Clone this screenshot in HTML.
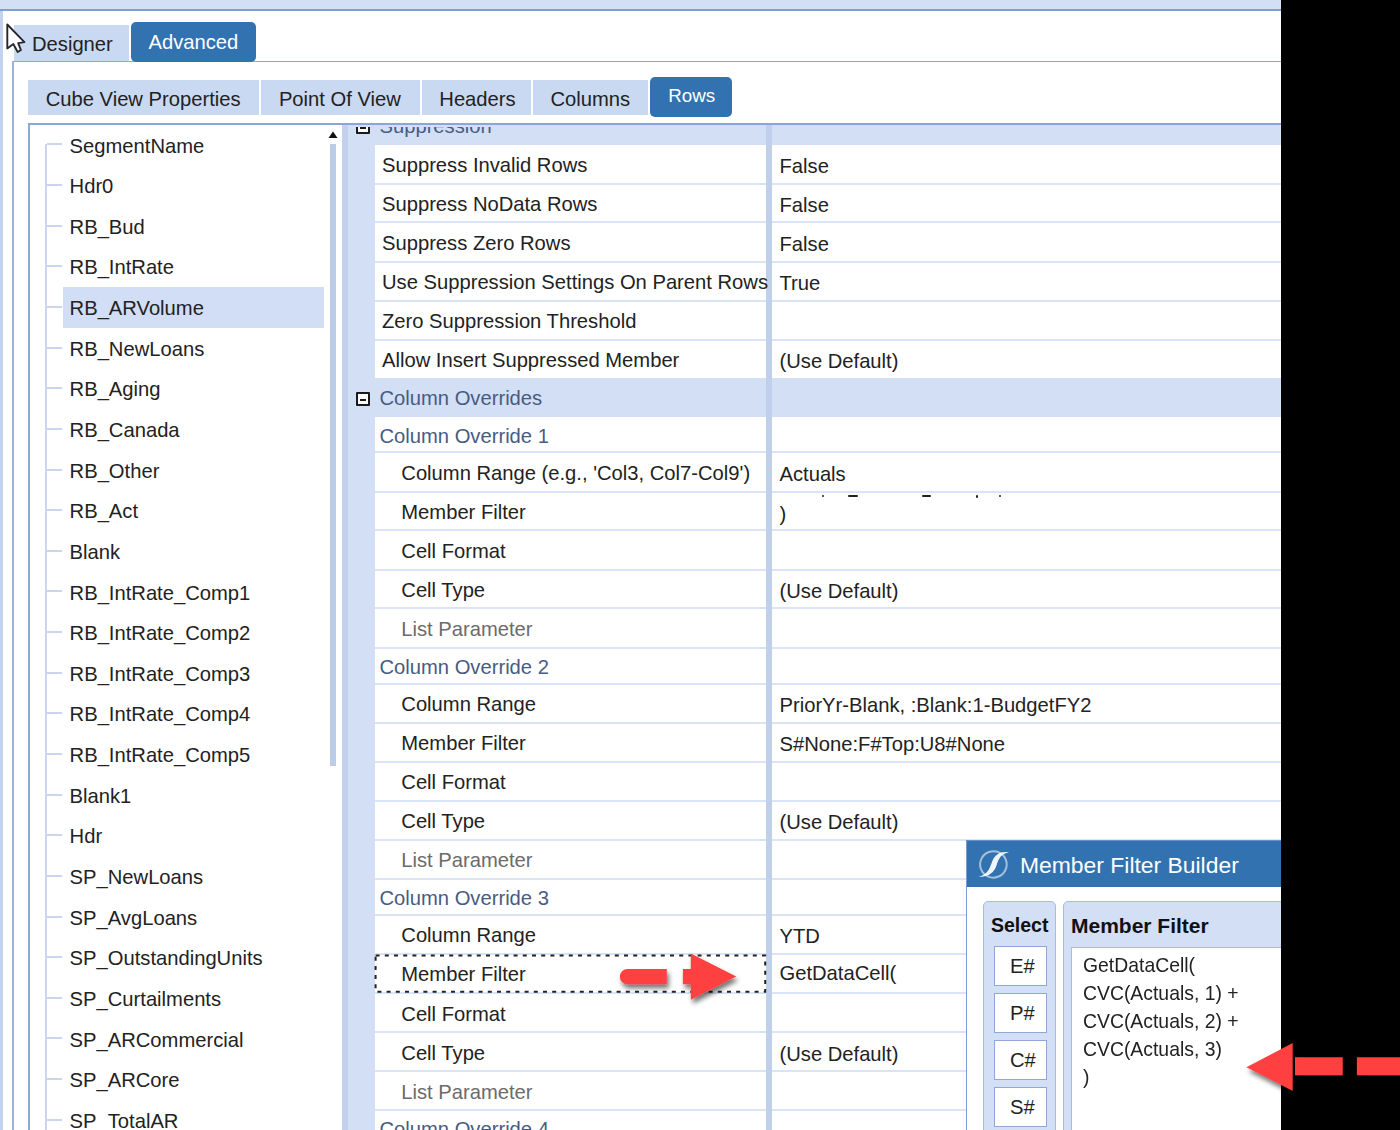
<!DOCTYPE html><html><head><meta charset="utf-8"><style>
html,body{margin:0;padding:0}
body{width:1400px;height:1130px;position:relative;overflow:hidden;background:#fff;font-family:"Liberation Sans",sans-serif;color:#222}
div,span,svg{position:absolute}
.t{white-space:nowrap}
</style></head><body>
<div style="left:0px;top:0px;width:1281px;height:9px;background:#d3dff5"></div>
<div style="left:0px;top:9px;width:1281px;height:2px;background:#7f9ed3"></div>
<div style="left:0px;top:11px;width:3px;height:1119px;background:#c3d2ee"></div>
<div style="left:13px;top:61px;width:1268px;height:1px;background:#8ea9d6"></div>
<div style="left:12px;top:61px;width:2px;height:1069px;background:#9db2d8"></div>
<div style="left:14px;top:25px;width:115px;height:36px;background:#c9d9f1"></div>
<span class="t" style="left:32px;top:33.60px;font-size:20.2px;line-height:20.2px;">Designer</span>
<div style="left:131px;top:22px;width:125px;height:40px;background:#3372b1;border-radius:5px"></div>
<span class="t" style="left:148.5px;top:31.50px;font-size:20.2px;line-height:20.2px;color:#fff">Advanced</span>
<div style="left:28px;top:80px;width:231px;height:35px;background:#c9d9f1"></div>
<span class="t" style="left:45.7px;top:89.20px;font-size:20.2px;line-height:20.2px;">Cube View Properties</span>
<div style="left:261px;top:80px;width:159px;height:35px;background:#c9d9f1"></div>
<span class="t" style="left:278.9px;top:88.60px;font-size:20.2px;line-height:20.2px;">Point Of View</span>
<div style="left:422px;top:80px;width:109px;height:35px;background:#c9d9f1"></div>
<span class="t" style="left:439.3px;top:88.60px;font-size:20.2px;line-height:20.2px;">Headers</span>
<div style="left:533px;top:80px;width:115px;height:35px;background:#c9d9f1"></div>
<span class="t" style="left:550.4px;top:88.80px;font-size:20.2px;line-height:20.2px;">Columns</span>
<div style="left:650px;top:77px;width:82px;height:40px;background:#3372b1;border-radius:5px"></div>
<span class="t" style="left:668.3px;top:87.29px;font-size:18.8px;line-height:18.8px;color:#fff">Rows</span>
<div style="left:28px;top:123px;width:1253px;height:2px;background:#8aa6d6"></div>
<div style="left:28px;top:123px;width:2px;height:1007px;background:#8aa6d6"></div>
<div style="left:62.5px;top:287.4px;width:261px;height:40.6px;background:#d2def5"></div>
<div style="left:45px;top:143.5px;width:2px;height:990px;background:#c9d6ee"></div>
<div style="left:47px;top:143.4px;width:15px;height:2px;background:#c9d6ee"></div>
<span class="t" style="left:69.6px;top:135.50px;font-size:20.2px;line-height:20.2px;">SegmentName</span>
<div style="left:47px;top:184.04000000000002px;width:15px;height:2px;background:#c9d6ee"></div>
<span class="t" style="left:69.6px;top:176.14px;font-size:20.2px;line-height:20.2px;">Hdr0</span>
<div style="left:47px;top:224.68px;width:15px;height:2px;background:#c9d6ee"></div>
<span class="t" style="left:69.6px;top:216.78px;font-size:20.2px;line-height:20.2px;">RB_Bud</span>
<div style="left:47px;top:265.32px;width:15px;height:2px;background:#c9d6ee"></div>
<span class="t" style="left:69.6px;top:257.42px;font-size:20.2px;line-height:20.2px;">RB_IntRate</span>
<div style="left:47px;top:305.96000000000004px;width:15px;height:2px;background:#c9d6ee"></div>
<span class="t" style="left:69.6px;top:298.06px;font-size:20.2px;line-height:20.2px;">RB_ARVolume</span>
<div style="left:47px;top:346.6px;width:15px;height:2px;background:#c9d6ee"></div>
<span class="t" style="left:69.6px;top:338.70px;font-size:20.2px;line-height:20.2px;">RB_NewLoans</span>
<div style="left:47px;top:387.24px;width:15px;height:2px;background:#c9d6ee"></div>
<span class="t" style="left:69.6px;top:379.34px;font-size:20.2px;line-height:20.2px;">RB_Aging</span>
<div style="left:47px;top:427.88px;width:15px;height:2px;background:#c9d6ee"></div>
<span class="t" style="left:69.6px;top:419.98px;font-size:20.2px;line-height:20.2px;">RB_Canada</span>
<div style="left:47px;top:468.52px;width:15px;height:2px;background:#c9d6ee"></div>
<span class="t" style="left:69.6px;top:460.62px;font-size:20.2px;line-height:20.2px;">RB_Other</span>
<div style="left:47px;top:509.15999999999997px;width:15px;height:2px;background:#c9d6ee"></div>
<span class="t" style="left:69.6px;top:501.26px;font-size:20.2px;line-height:20.2px;">RB_Act</span>
<div style="left:47px;top:549.8px;width:15px;height:2px;background:#c9d6ee"></div>
<span class="t" style="left:69.6px;top:541.90px;font-size:20.2px;line-height:20.2px;">Blank</span>
<div style="left:47px;top:590.44px;width:15px;height:2px;background:#c9d6ee"></div>
<span class="t" style="left:69.6px;top:582.54px;font-size:20.2px;line-height:20.2px;">RB_IntRate_Comp1</span>
<div style="left:47px;top:631.08px;width:15px;height:2px;background:#c9d6ee"></div>
<span class="t" style="left:69.6px;top:623.18px;font-size:20.2px;line-height:20.2px;">RB_IntRate_Comp2</span>
<div style="left:47px;top:671.72px;width:15px;height:2px;background:#c9d6ee"></div>
<span class="t" style="left:69.6px;top:663.82px;font-size:20.2px;line-height:20.2px;">RB_IntRate_Comp3</span>
<div style="left:47px;top:712.36px;width:15px;height:2px;background:#c9d6ee"></div>
<span class="t" style="left:69.6px;top:704.46px;font-size:20.2px;line-height:20.2px;">RB_IntRate_Comp4</span>
<div style="left:47px;top:753.0px;width:15px;height:2px;background:#c9d6ee"></div>
<span class="t" style="left:69.6px;top:745.10px;font-size:20.2px;line-height:20.2px;">RB_IntRate_Comp5</span>
<div style="left:47px;top:793.64px;width:15px;height:2px;background:#c9d6ee"></div>
<span class="t" style="left:69.6px;top:785.74px;font-size:20.2px;line-height:20.2px;">Blank1</span>
<div style="left:47px;top:834.28px;width:15px;height:2px;background:#c9d6ee"></div>
<span class="t" style="left:69.6px;top:826.38px;font-size:20.2px;line-height:20.2px;">Hdr</span>
<div style="left:47px;top:874.92px;width:15px;height:2px;background:#c9d6ee"></div>
<span class="t" style="left:69.6px;top:867.02px;font-size:20.2px;line-height:20.2px;">SP_NewLoans</span>
<div style="left:47px;top:915.56px;width:15px;height:2px;background:#c9d6ee"></div>
<span class="t" style="left:69.6px;top:907.66px;font-size:20.2px;line-height:20.2px;">SP_AvgLoans</span>
<div style="left:47px;top:956.1999999999999px;width:15px;height:2px;background:#c9d6ee"></div>
<span class="t" style="left:69.6px;top:948.30px;font-size:20.2px;line-height:20.2px;">SP_OutstandingUnits</span>
<div style="left:47px;top:996.84px;width:15px;height:2px;background:#c9d6ee"></div>
<span class="t" style="left:69.6px;top:988.94px;font-size:20.2px;line-height:20.2px;">SP_Curtailments</span>
<div style="left:47px;top:1037.48px;width:15px;height:2px;background:#c9d6ee"></div>
<span class="t" style="left:69.6px;top:1029.58px;font-size:20.2px;line-height:20.2px;">SP_ARCommercial</span>
<div style="left:47px;top:1078.1200000000001px;width:15px;height:2px;background:#c9d6ee"></div>
<span class="t" style="left:69.6px;top:1070.22px;font-size:20.2px;line-height:20.2px;">SP_ARCore</span>
<div style="left:47px;top:1118.76px;width:15px;height:2px;background:#c9d6ee"></div>
<span class="t" style="left:69.6px;top:1110.86px;font-size:20.2px;line-height:20.2px;">SP_TotalAR</span>
<svg style="left:327px;top:130px" width="12" height="9"><polygon points="1.5,8 6,1.5 10.5,8" fill="#111"/></svg>
<div style="left:330px;top:144px;width:6px;height:622px;background:#bccbe6"></div>
<div style="left:342px;top:125px;width:6px;height:2px;background:#c3d2ec"></div>
<div style="left:348px;top:125px;width:933px;height:2px;background:#d2dff5"></div>
<div style="left:766px;top:125px;width:6px;height:2px;background:#c0d0ea"></div>
<div style="left:0;top:127px;width:1281px;height:1003px;overflow:hidden"><div style="left:0;top:-127px;width:1281px;height:1130px">
<div style="left:342px;top:125px;width:6px;height:1005px;background:#c3d2ec"></div>
<div style="left:348px;top:125px;width:933px;height:1005px;background:#d2dff5"></div>
<div style="left:375px;top:144.8px;width:906px;height:38.89999999999998px;background:#fff"></div>
<div style="left:375px;top:183.7px;width:906px;height:38.60000000000002px;background:#fff"></div>
<div style="left:375px;top:222.3px;width:906px;height:39.39999999999998px;background:#fff"></div>
<div style="left:375px;top:261.7px;width:906px;height:39.19999999999999px;background:#fff"></div>
<div style="left:375px;top:300.9px;width:906px;height:38.900000000000034px;background:#fff"></div>
<div style="left:375px;top:339.8px;width:906px;height:38.39999999999998px;background:#fff"></div>
<div style="left:375px;top:416.7px;width:906px;height:35.60000000000002px;background:#fff"></div>
<div style="left:375px;top:452.3px;width:906px;height:39.19999999999999px;background:#fff"></div>
<div style="left:375px;top:491.5px;width:906px;height:38.89999999999998px;background:#fff"></div>
<div style="left:375px;top:530.4px;width:906px;height:39.10000000000002px;background:#fff"></div>
<div style="left:375px;top:569.5px;width:906px;height:38.89999999999998px;background:#fff"></div>
<div style="left:375px;top:608.4px;width:906px;height:39.200000000000045px;background:#fff"></div>
<div style="left:375px;top:647.6px;width:906px;height:36.10000000000002px;background:#fff"></div>
<div style="left:375px;top:683.7px;width:906px;height:39.09999999999991px;background:#fff"></div>
<div style="left:375px;top:722.8px;width:906px;height:39.0px;background:#fff"></div>
<div style="left:375px;top:761.8px;width:906px;height:38.90000000000009px;background:#fff"></div>
<div style="left:375px;top:800.7px;width:906px;height:39.19999999999993px;background:#fff"></div>
<div style="left:375px;top:839.9px;width:906px;height:39.10000000000002px;background:#fff"></div>
<div style="left:375px;top:879.0px;width:906px;height:35.799999999999955px;background:#fff"></div>
<div style="left:375px;top:914.8px;width:906px;height:39.200000000000045px;background:#fff"></div>
<div style="left:375px;top:954.0px;width:906px;height:39.10000000000002px;background:#fff"></div>
<div style="left:375px;top:993.1px;width:906px;height:39.10000000000002px;background:#fff"></div>
<div style="left:375px;top:1032.2px;width:906px;height:39.09999999999991px;background:#fff"></div>
<div style="left:375px;top:1071.3px;width:906px;height:39.100000000000136px;background:#fff"></div>
<div style="left:375px;top:1110.4px;width:906px;height:39.09999999999991px;background:#fff"></div>
<div style="left:375px;top:182.7px;width:906px;height:2px;background:#d9e4f6"></div>
<div style="left:375px;top:221.3px;width:906px;height:2px;background:#d9e4f6"></div>
<div style="left:375px;top:260.7px;width:906px;height:2px;background:#d9e4f6"></div>
<div style="left:375px;top:299.9px;width:906px;height:2px;background:#d9e4f6"></div>
<div style="left:375px;top:338.8px;width:906px;height:2px;background:#d9e4f6"></div>
<div style="left:375px;top:451.3px;width:906px;height:2px;background:#d9e4f6"></div>
<div style="left:375px;top:490.5px;width:906px;height:2px;background:#d9e4f6"></div>
<div style="left:375px;top:529.4px;width:906px;height:2px;background:#d9e4f6"></div>
<div style="left:375px;top:568.5px;width:906px;height:2px;background:#d9e4f6"></div>
<div style="left:375px;top:607.4px;width:906px;height:2px;background:#d9e4f6"></div>
<div style="left:375px;top:646.6px;width:906px;height:2px;background:#d9e4f6"></div>
<div style="left:375px;top:682.7px;width:906px;height:2px;background:#d9e4f6"></div>
<div style="left:375px;top:721.8px;width:906px;height:2px;background:#d9e4f6"></div>
<div style="left:375px;top:760.8px;width:906px;height:2px;background:#d9e4f6"></div>
<div style="left:375px;top:799.7px;width:906px;height:2px;background:#d9e4f6"></div>
<div style="left:375px;top:838.9px;width:906px;height:2px;background:#d9e4f6"></div>
<div style="left:375px;top:878.0px;width:906px;height:2px;background:#d9e4f6"></div>
<div style="left:375px;top:913.8px;width:906px;height:2px;background:#d9e4f6"></div>
<div style="left:375px;top:953.0px;width:906px;height:2px;background:#d9e4f6"></div>
<div style="left:375px;top:992.1px;width:906px;height:2px;background:#d9e4f6"></div>
<div style="left:375px;top:1031.2px;width:906px;height:2px;background:#d9e4f6"></div>
<div style="left:375px;top:1070.3px;width:906px;height:2px;background:#d9e4f6"></div>
<div style="left:375px;top:1109.4px;width:906px;height:2px;background:#d9e4f6"></div>
<div style="left:766px;top:125px;width:6px;height:1005px;background:#c0d0ea"></div>
<div style="left:356px;top:120px;width:14px;height:14px;box-sizing:border-box;border:2px solid #1a1a1a;background:#fff;border-radius:1px"><div style="left:2px;top:5px;width:6px;height:2px;background:#1a1a1a"></div></div>
<span class="t" style="left:379.5px;top:115.90px;font-size:20.2px;line-height:20.2px;color:#475b84">Suppression</span>
<div style="left:356px;top:392px;width:14px;height:14px;box-sizing:border-box;border:2px solid #1a1a1a;background:#fff;border-radius:1px"><div style="left:2px;top:5px;width:6px;height:2px;background:#1a1a1a"></div></div>
<span class="t" style="left:379.5px;top:387.90px;font-size:20.2px;line-height:20.2px;color:#475b84">Column Overrides</span>
<span class="t" style="left:382px;top:155.20px;font-size:20.2px;line-height:20.2px;">Suppress Invalid Rows</span>
<span class="t" style="left:779.5px;top:156.40px;font-size:20.2px;line-height:20.2px;">False</span>
<span class="t" style="left:382px;top:194.10px;font-size:20.2px;line-height:20.2px;">Suppress NoData Rows</span>
<span class="t" style="left:779.5px;top:195.30px;font-size:20.2px;line-height:20.2px;">False</span>
<span class="t" style="left:382px;top:232.70px;font-size:20.2px;line-height:20.2px;">Suppress Zero Rows</span>
<span class="t" style="left:779.5px;top:233.90px;font-size:20.2px;line-height:20.2px;">False</span>
<span class="t" style="left:382px;top:272.10px;font-size:20.2px;line-height:20.2px;">Use Suppression Settings On Parent Rows</span>
<span class="t" style="left:779.5px;top:273.30px;font-size:20.2px;line-height:20.2px;">True</span>
<span class="t" style="left:382px;top:311.30px;font-size:20.2px;line-height:20.2px;">Zero Suppression Threshold</span>
<span class="t" style="left:382px;top:350.20px;font-size:20.2px;line-height:20.2px;">Allow Insert Suppressed Member</span>
<span class="t" style="left:779.5px;top:351.40px;font-size:20.2px;line-height:20.2px;">(Use Default)</span>
<span class="t" style="left:379.5px;top:425.60px;font-size:20.2px;line-height:20.2px;color:#475b84">Column Override 1</span>
<span class="t" style="left:401.3px;top:462.70px;font-size:20.2px;line-height:20.2px;">Column Range (e.g., 'Col3, Col7-Col9')</span>
<span class="t" style="left:779.5px;top:463.90px;font-size:20.2px;line-height:20.2px;">Actuals</span>
<span class="t" style="left:401.3px;top:501.90px;font-size:20.2px;line-height:20.2px;">Member Filter</span>
<span class="t" style="left:779.5px;top:503.90px;font-size:20.2px;line-height:20.2px;">)</span>
<span class="t" style="left:401.3px;top:540.80px;font-size:20.2px;line-height:20.2px;">Cell Format</span>
<span class="t" style="left:401.3px;top:579.90px;font-size:20.2px;line-height:20.2px;">Cell Type</span>
<span class="t" style="left:779.5px;top:581.10px;font-size:20.2px;line-height:20.2px;">(Use Default)</span>
<span class="t" style="left:401.3px;top:618.80px;font-size:20.2px;line-height:20.2px;color:#6b6b6b">List Parameter</span>
<span class="t" style="left:379.5px;top:656.50px;font-size:20.2px;line-height:20.2px;color:#475b84">Column Override 2</span>
<span class="t" style="left:401.3px;top:694.10px;font-size:20.2px;line-height:20.2px;">Column Range</span>
<span class="t" style="left:779.5px;top:695.30px;font-size:20.2px;line-height:20.2px;">PriorYr-Blank, :Blank:1-BudgetFY2</span>
<span class="t" style="left:401.3px;top:733.20px;font-size:20.2px;line-height:20.2px;">Member Filter</span>
<span class="t" style="left:779.5px;top:734.40px;font-size:20.2px;line-height:20.2px;">S#None:F#Top:U8#None</span>
<span class="t" style="left:401.3px;top:772.20px;font-size:20.2px;line-height:20.2px;">Cell Format</span>
<span class="t" style="left:401.3px;top:811.10px;font-size:20.2px;line-height:20.2px;">Cell Type</span>
<span class="t" style="left:779.5px;top:812.30px;font-size:20.2px;line-height:20.2px;">(Use Default)</span>
<span class="t" style="left:401.3px;top:850.30px;font-size:20.2px;line-height:20.2px;color:#6b6b6b">List Parameter</span>
<span class="t" style="left:379.5px;top:887.90px;font-size:20.2px;line-height:20.2px;color:#475b84">Column Override 3</span>
<span class="t" style="left:401.3px;top:925.20px;font-size:20.2px;line-height:20.2px;">Column Range</span>
<span class="t" style="left:779.5px;top:926.40px;font-size:20.2px;line-height:20.2px;">YTD</span>
<span class="t" style="left:401.3px;top:964.40px;font-size:20.2px;line-height:20.2px;">Member Filter</span>
<span class="t" style="left:779.5px;top:962.90px;font-size:20.2px;line-height:20.2px;">GetDataCell(</span>
<span class="t" style="left:401.3px;top:1003.50px;font-size:20.2px;line-height:20.2px;">Cell Format</span>
<span class="t" style="left:401.3px;top:1042.60px;font-size:20.2px;line-height:20.2px;">Cell Type</span>
<span class="t" style="left:779.5px;top:1043.80px;font-size:20.2px;line-height:20.2px;">(Use Default)</span>
<span class="t" style="left:401.3px;top:1081.70px;font-size:20.2px;line-height:20.2px;color:#6b6b6b">List Parameter</span>
<span class="t" style="left:379.5px;top:1119.30px;font-size:20.2px;line-height:20.2px;color:#475b84">Column Override 4</span>
<div style="left:822px;top:495.2px;width:2px;height:2px;background:#222;border-radius:1px"></div>
<div style="left:848.3px;top:495.2px;width:9.6px;height:2px;background:#222;border-radius:1px"></div>
<div style="left:922px;top:495.2px;width:9.4px;height:2px;background:#222;border-radius:1px"></div>
<div style="left:976px;top:495.2px;width:2px;height:2.5px;background:#222;border-radius:1px"></div>
<div style="left:998.5px;top:495.2px;width:2px;height:2px;background:#222;border-radius:1px"></div>
</div></div>
<svg style="left:370px;top:950px" width="400" height="50"><rect x="5.6" y="5.5" width="389.6" height="36.2" fill="none" stroke="#222" stroke-width="2" stroke-dasharray="4 5.2"/></svg>
<svg style="left:600px;top:940px" width="160" height="80" viewBox="0 0 160 80">
<defs><filter id="sh" x="-30%" y="-30%" width="160%" height="160%"><feGaussianBlur in="SourceAlpha" stdDeviation="2.5"/><feOffset dx="2" dy="4"/><feComponentTransfer><feFuncA type="linear" slope="0.55"/></feComponentTransfer><feMerge><feMergeNode/><feMergeNode in="SourceGraphic"/></feMerge></filter></defs>
<g filter="url(#sh)" fill="#ff4040">
<path d="M27.5,29 H66.8 V44.3 H27.5 A7.65,7.65 0 0 1 27.5,29 Z"/>
<path d="M82.9,29 H90.8 V13.5 L136.2,36.6 L90.8,59.8 V44.3 H82.9 Z"/>
</g></svg>
<div style="left:1281px;top:0px;width:119px;height:1130px;background:#000"></div>
<div style="left:966px;top:840px;width:340px;height:290px;background:#fff"></div>
<div style="left:966px;top:840px;width:1px;height:290px;background:#7e9bd0"></div>
<div style="left:967px;top:840px;width:340px;height:47px;background:#3372b1"></div>
<div style="left:966px;top:840px;width:340px;height:1px;background:#6c8cc6"></div>
<span class="t" style="left:1020px;top:854.32px;font-size:22.9px;line-height:22.9px;color:#fff">Member Filter Builder</span>
<svg style="left:966px;top:840px" width="50" height="47" viewBox="0 0 50 47">
<ellipse cx="27.4" cy="24.4" rx="13.3" ry="13.2" fill="none" stroke="#fff" stroke-opacity="0.55" stroke-width="2" transform="rotate(-20 27.4 24.4)"/>
<path d="M12,36.5 C22,37.5 28,33 30.5,25.5 C32.5,19 35,13.5 43,12.3 C35,11 29,14 26,22 C23.5,29 21,35.5 12,36.5 Z" fill="#fff" fill-opacity="0.92"/>
</svg>
<div style="left:983px;top:901px;width:73px;height:260px;box-sizing:border-box;border:1.5px solid #a7bce3;border-radius:5px;background:#d2dff5"></div>
<div style="left:1063px;top:901px;width:260px;height:260px;box-sizing:border-box;border:1.5px solid #a7bce3;border-radius:5px;background:#d2dff5"></div>
<span class="t" style="left:991px;top:915.89px;font-size:19.5px;line-height:19.5px;font-weight:bold;color:#111">Select</span>
<span class="t" style="left:1071px;top:914.62px;font-size:21px;line-height:21px;font-weight:bold;color:#111">Member Filter</span>
<div style="left:994px;top:946px;width:53px;height:40px;box-sizing:border-box;border:1.5px solid #8fa9d6;background:#fff"></div>
<span class="t" style="left:1010px;top:956.30px;font-size:20.2px;line-height:20.2px;">E#</span>
<div style="left:994px;top:993px;width:53px;height:40px;box-sizing:border-box;border:1.5px solid #8fa9d6;background:#fff"></div>
<span class="t" style="left:1010px;top:1003.30px;font-size:20.2px;line-height:20.2px;">P#</span>
<div style="left:994px;top:1040px;width:53px;height:40px;box-sizing:border-box;border:1.5px solid #8fa9d6;background:#fff"></div>
<span class="t" style="left:1010px;top:1050.30px;font-size:20.2px;line-height:20.2px;">C#</span>
<div style="left:994px;top:1087px;width:53px;height:40px;box-sizing:border-box;border:1.5px solid #8fa9d6;background:#fff"></div>
<span class="t" style="left:1010px;top:1097.30px;font-size:20.2px;line-height:20.2px;">S#</span>
<div style="left:1071px;top:947px;width:260px;height:200px;box-sizing:border-box;border:1.5px solid #a7bce3;background:#fff"></div>
<span class="t" style="left:1083.3px;top:954.70px;font-size:20.2px;line-height:20.2px;transform:scaleX(0.96);transform-origin:0 0">GetDataCell(</span>
<span class="t" style="left:1083.3px;top:982.70px;font-size:20.2px;line-height:20.2px;transform:scaleX(0.96);transform-origin:0 0">CVC(Actuals, 1) +</span>
<span class="t" style="left:1083.3px;top:1010.70px;font-size:20.2px;line-height:20.2px;transform:scaleX(0.96);transform-origin:0 0">CVC(Actuals, 2) +</span>
<span class="t" style="left:1083.3px;top:1038.70px;font-size:20.2px;line-height:20.2px;transform:scaleX(0.96);transform-origin:0 0">CVC(Actuals, 3)</span>
<span class="t" style="left:1083.3px;top:1066.70px;font-size:20.2px;line-height:20.2px;transform:scaleX(0.96);transform-origin:0 0">)</span>
<div style="left:1281px;top:840px;width:119px;height:290px;background:#000"></div>
<svg style="left:1230px;top:1030px" width="170" height="75" viewBox="0 0 170 75">
<defs><filter id="sh2" x="-30%" y="-30%" width="160%" height="160%"><feGaussianBlur in="SourceAlpha" stdDeviation="2.5"/><feOffset dx="2" dy="4"/><feComponentTransfer><feFuncA type="linear" slope="0.55"/></feComponentTransfer><feMerge><feMergeNode/><feMergeNode in="SourceGraphic"/></feMerge></filter></defs>
<g filter="url(#sh2)" fill="#ff4040">
<path d="M16.4,37.3 L62.6,13 V60.7 Z"/>
<path d="M65,27.3 H112.7 V45.3 H65 Z"/>
<path d="M126.9,27.3 H175 V45.3 H126.9 Z"/>
</g></svg>
<svg style="left:4px;top:21px" width="26" height="36" viewBox="0 0 26 36">
<path d="M3.3,3.5 V27.4 L9.3,23 L13.7,31 L16.9,29 L14.2,22.1 L20.4,21.1 Z" fill="#fff" stroke="#262630" stroke-width="1.9" stroke-linejoin="round"/>
</svg>
</body></html>
